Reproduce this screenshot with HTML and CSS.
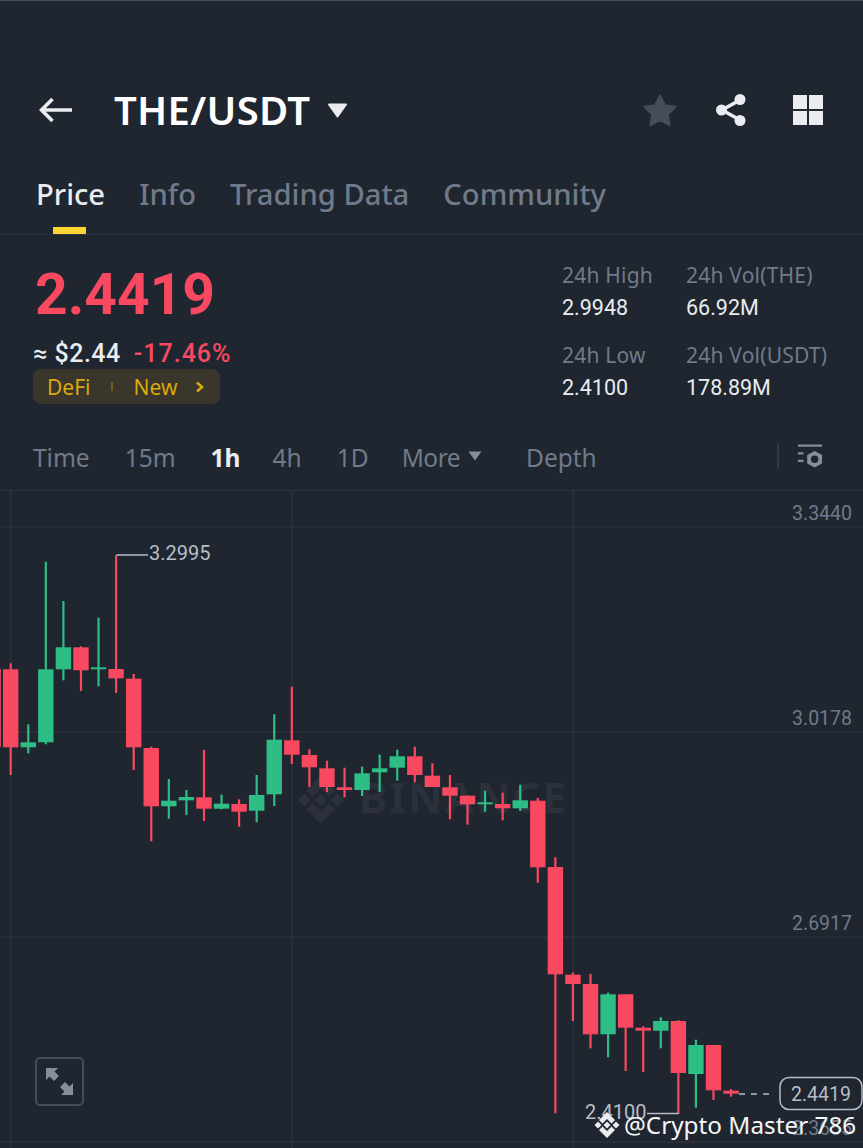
FILE: index.html
```html
<!DOCTYPE html>
<html lang="en">
<head>
  <meta charset="UTF-8">
  <meta name="viewport" content="width=device-width, initial-scale=1.0">
  <title>THE/USDT</title>
  <link rel="stylesheet" href="styles.css">
</head>
<body>
  <div class="screen">
    <header class="top-bar">
      <svg class="back-icon" viewBox="0 0 34 26"><path d="M2 13H33M13.500 2 2.500 13 13.500 24" fill="none" stroke="#eaecef" stroke-width="3.600"/></svg>
      <h1 class="pair">THE/USDT</h1>
      <svg class="pair-caret" viewBox="0 0 21 15"><path d="M2 1.500H19L10.500 13.500Z" fill="#eaecef" stroke="#eaecef" stroke-width="2" stroke-linejoin="round"/></svg>
      <div class="top-icons">
        <svg class="star-icon" viewBox="0 0 34 33"><path d="M17 1.500 21.800 11.200 32.500 12.700 24.800 20.200 26.600 31 17 25.900 7.400 31 9.200 20.200 1.500 12.700 12.200 11.200Z" fill="#474d57" stroke="#474d57" stroke-width="2" stroke-linejoin="round"/></svg>
        <svg class="share-icon" viewBox="0 0 32 34"><path d="M25 7 7 17 25 27" fill="none" stroke="#eaecef" stroke-width="3.600"/><circle cx="25" cy="6.500" r="5.500" fill="#eaecef"/><circle cx="6.500" cy="17" r="5.500" fill="#eaecef"/><circle cx="25" cy="27.500" r="5.500" fill="#eaecef"/></svg>
        <div class="grid-icon"><i></i><i></i><i></i><i></i></div>
      </div>
    </header>

    <nav class="tabs">
      <a class="tab active">Price</a>
      <a class="tab">Info</a>
      <a class="tab">Trading Data</a>
      <a class="tab">Community</a>
    </nav>

    <section class="summary">
      <div class="price-box">
        <div class="last-price">2.4419</div>
        <div class="price-sub"><span class="usd">≈ $2.44</span><span class="change">-17.46%</span></div>
        <div class="tags">
          <span>DeFi</span>
          <i class="tag-sep"></i>
          <span>New</span>
          <svg class="tag-arrow" viewBox="0 0 10 12"><path d="M2 1.500 7 6 2 10.500" fill="none" stroke="#d9a90e" stroke-width="2.600"/></svg>
        </div>
      </div>
      <div class="stats">
        <div class="stat"><span class="stat-label">24h High</span><span class="stat-value">2.9948</span></div>
        <div class="stat"><span class="stat-label">24h Vol(THE)</span><span class="stat-value">66.92M</span></div>
        <div class="stat"><span class="stat-label">24h Low</span><span class="stat-value">2.4100</span></div>
        <div class="stat"><span class="stat-label">24h Vol(USDT)</span><span class="stat-value">178.89M</span></div>
      </div>
    </section>

    <div class="intervals">
      <span>Time</span>
      <span>15m</span>
      <span class="current">1h</span>
      <span>4h</span>
      <span>1D</span>
      <span class="more">More <svg class="more-caret" viewBox="0 0 14 10"><path d="M0.500 0.500H13.500L7 9.500Z" fill="#848e9c"/></svg></span>
      <span class="depth">Depth</span>
      <i class="intervals-sep"></i>
      <svg class="settings-icon" viewBox="0 0 28 28"><path d="M1 1.500H27V4H1ZM1 10H7V12.500H1ZM1 18H7V20.500H1Z" fill="#848e9c"/><path fill-rule="evenodd" d="M19 8.500 27 13V22L19 26.500 11 22V13ZM19 13.500A4 4 0 1 0 19 21.500 4 4 0 1 0 19 13.500Z" fill="#848e9c"/></svg>
    </div>

    <div class="chart">
      <svg id="chartSvg" class="chart-svg" viewBox="0 491 863 657"></svg>
      <button class="expand" type="button">
        <svg viewBox="0 0 29 29"><path d="M1 1H13L9.500 4.500 14 9 9 14 4.500 9.500 1 13ZM28 28H16L19.500 24.500 15 20 20 15 24.500 19.500 28 16Z" fill="#848e9c"/></svg>
      </button>
      <div class="credit">
        <svg class="credit-logo" viewBox="0 0 28 28"><path d="M14 1 22 9 18.500 12.500 14 8 9.500 12.500 6 9ZM5 10.500 8.500 14 5 17.500 1.500 14ZM23 10.500 26.500 14 23 17.500 19.500 14ZM14 10.500 17.500 14 14 17.500 10.500 14ZM14 27 22 19 18.500 15.500 14 20 9.500 15.500 6 19Z" fill="#eaecef"/></svg>
        <span>@Crypto Master 786</span>
      </div>
    </div>
  </div>
  <script src="chart.js"></script>
</body>
</html>
```

FILE: styles.css
```css
* {
  box-sizing: border-box;
}
body {
  margin: 0;
  background-color: #1f2630;
  font-family: "Noto Sans", Roboto, sans-serif;
  color: #eaecef;
}
.screen {
  height: 1148px;
  border-top: 1px solid #474d57;
  display: flex;
  flex-direction: column;
  overflow: hidden;
}

/* top bar */
.top-bar {
  display: flex;
  align-items: center;
  height: 46px;
  margin-top: 86px;
  padding: 0 40px 0 39px;
}
.back-icon {
  width: 34px;
  height: 26px;
  margin-right: 41px;
}
.pair {
  margin: 0;
  font-size: 40px;
  font-weight: 600;
  line-height: 46px;
  color: #fff;
  letter-spacing: 0.3px;
}
.pair-caret {
  width: 21px;
  height: 15px;
  margin-left: 17px;
}
.top-icons {
  margin-left: auto;
  display: flex;
  align-items: center;
}
.star-icon {
  width: 34px;
  height: 33px;
  margin-right: 38px;
}
.share-icon {
  width: 32px;
  height: 34px;
  margin-right: 46px;
}
.grid-icon {
  display: grid;
  grid-template-columns: 14px 14px;
  grid-template-rows: 14px 14px;
  gap: 2px;
}
.grid-icon i {
  background-color: #eaecef;
}

/* tabs */
.tabs {
  display: flex;
  gap: 34px;
  height: 102px;
  padding: 41px 36px 0;
  border-bottom: 1px solid #2b323d;
}
.tab {
  position: relative;
  font-size: 29.200px;
  font-weight: 500;
  line-height: 40px;
  color: #707a8a;
}
.tab.active {
  color: #eaecef;
}
.tab.active::after {
  content: "";
  position: absolute;
  left: 17px;
  bottom: 0;
  width: 33px;
  height: 7px;
  background-color: #fcd535;
}

/* price + stats */
.summary {
  display: flex;
  justify-content: space-between;
  height: 176px;
  padding: 0 33px;
}
.price-box {
  display: flex;
  flex-direction: column;
  align-items: flex-start;
  padding-top: 26px;
}
.last-price {
  font-family: Roboto, sans-serif;
  font-size: 57px;
  font-weight: 700;
  line-height: 68px;
  color: #f84960;
  margin-left: 2px;
}
.price-sub {
  display: flex;
  gap: 13px;
  margin-top: 10px;
  font-family: Roboto, sans-serif;
  font-size: 25px;
  line-height: 30px;
  font-weight: 500;
}
.usd {
  letter-spacing: 0.5px;
}
.change {
  color: #f84960;
  letter-spacing: 1px;
}
.tags {
  display: flex;
  align-items: center;
  width: 187px;
  height: 35px;
  padding: 0 14px;
  border-radius: 8px;
  background-color: #3a362b;
  font-size: 21px;
  color: #d9a90e;
}
.tag-sep {
  width: 2px;
  height: 9px;
  margin: 0 21px 0 20px;
  background-color: #6e5d1f;
}
.tag-arrow {
  width: 10px;
  height: 12px;
  margin-left: 18px;
}
.stats {
  display: grid;
  grid-template-columns: 124px 144px;
  grid-template-rows: 80px 80px;
  padding-top: 26px;
}
.stat {
  display: flex;
  flex-direction: column;
}
.stat-label {
  font-size: 21px;
  letter-spacing: 0.2px;
  line-height: 28px;
  color: #707a8a;
  white-space: nowrap;
}
.stat-value {
  margin-top: 3px;
  font-family: Roboto, sans-serif;
  font-size: 21.500px;
  line-height: 32px;
  color: #eaecef;
}

/* intervals */
.intervals {
  display: flex;
  align-items: center;
  height: 80px;
  padding: 13px 40px 0 33px;
  border-bottom: 1px solid #2b323d;
  font-size: 24.500px;
  color: #707a8a;
}
.intervals span {
  margin-right: 35px;
}
.intervals .current {
  color: #eaecef;
  font-weight: 700;
  margin-right: 32px;
}
.intervals .more {
  margin-left: -2px;
  margin-right: 44px;
  letter-spacing: -0.5px;
}
.more-caret {
  width: 14px;
  height: 10px;
  margin-left: 2px;
  vertical-align: 6px;
}
.intervals .depth {
  margin-right: auto;
}
.intervals-sep {
  width: 2px;
  height: 26px;
  margin-top: -3px;
  background-color: #333a45;
}
.settings-icon {
  width: 26px;
  height: 26px;
  margin-left: 18px;
  margin-top: -2px;
}

/* chart */
.chart {
  position: relative;
  flex: 1;
  min-height: 0;
}
.chart-svg {
  display: block;
  width: 863px;
  height: 657px;
}
.grid-line {
  stroke: #2b323d;
  stroke-width: 1.500;
}
.price-label {
  font-family: Roboto, sans-serif;
  font-size: 19.500px;
  fill: #707a8a;
  text-anchor: end;
}
.up {
  fill: #2ebd85;
}
.down {
  fill: #f84960;
}
.extreme-label {
  font-family: Roboto, sans-serif;
  font-size: 20px;
  fill: #b7bdc6;
}
.extreme-line {
  fill: none;
  stroke: #b7bdc6;
  stroke-width: 1.500;
}
.last-dash {
  stroke: #b7bdc6;
  stroke-width: 1.500;
  stroke-dasharray: 6 6;
}
.last-tag {
  fill: #1f2630;
  stroke: #b7bdc6;
  stroke-width: 1.500;
}
.last-tag-text {
  font-family: Roboto, sans-serif;
  font-size: 19.500px;
  fill: #b7bdc6;
  text-anchor: middle;
}
.logo-mark {
  fill: #2b303b;
}
.logo-word {
  font-family: "Noto Sans", sans-serif;
  font-size: 42px;
  font-weight: 700;
  letter-spacing: 2.500px;
  fill: #2b303b;
}
.expand {
  position: absolute;
  left: 35px;
  top: 566px;
  width: 49px;
  height: 49px;
  padding: 8px;
  border: 2px solid #474d57;
  border-radius: 5px;
  background: none;
}
.expand svg {
  display: block;
  width: 29px;
  height: 29px;
}
.credit {
  position: absolute;
  left: 593px;
  top: 618px;
  display: flex;
  align-items: center;
  gap: 3px;
  font-size: 24.300px;
  line-height: 32px;
  color: #f5f5f5;
  white-space: nowrap;
}
.credit-logo {
  width: 28px;
  height: 28px;
}
```

FILE: chart.js
```js
// [color, wickTop, bodyTop, bodyBottom, wickBottom] in page px, one per hour
const candles = [
  ['down', 636, 669, 747, 747],
  ['down', 663.3, 669.3, 747.3, 775],
  ['up', 724.3, 742.3, 747.3, 753.3],
  ['up', 561.7, 669.3, 742.3, 744.3],
  ['up', 601, 647.3, 669.3, 680.3],
  ['down', 646.3, 647.3, 670.3, 691],
  ['up', 617.7, 667.3, 669.3, 686.3],
  ['down', 555.3, 669, 678.3, 693],
  ['down', 674, 678.7, 747.3, 770],
  ['down', 746.7, 748, 806.3, 841.3],
  ['up', 779, 800.7, 806.3, 818.7],
  ['up', 790, 797, 800.3, 815],
  ['down', 750, 797.3, 808.7, 821],
  ['up', 794.7, 803.7, 808.7, 809.3],
  ['down', 799.3, 804, 811.7, 826.7],
  ['up', 775, 795, 810.7, 822.3],
  ['up', 714.3, 739.7, 794.3, 806],
  ['down', 686.7, 740.3, 754.7, 764],
  ['down', 749.3, 755, 767.3, 787],
  ['down', 760.7, 768.3, 787, 792],
  ['down', 767.7, 787.3, 790, 797.3],
  ['up', 766.7, 773.3, 790, 796],
  ['up', 754.7, 768.3, 772.3, 792],
  ['up', 749.7, 756.3, 767.7, 780.7],
  ['down', 746.7, 756.3, 775, 782.3],
  ['down', 763.3, 775.7, 787, 787],
  ['down', 775, 787.3, 795.7, 819.3],
  ['down', 795.7, 795.7, 804.3, 824.7],
  ['up', 790.7, 802.3, 804, 811.7],
  ['down', 792.7, 804, 808.3, 820.3],
  ['up', 784.7, 800.3, 808.3, 811],
  ['down', 798, 800.7, 867.3, 882.7],
  ['down', 857.3, 867, 974.3, 1113.3],
  ['down', 972.7, 974.7, 984, 1021],
  ['down', 974, 984, 1034.3, 1048.3],
  ['up', 992.7, 994.3, 1034.3, 1057.3],
  ['down', 994.3, 994.3, 1027.7, 1071],
  ['down', 1026.3, 1027.7, 1030.7, 1072],
  ['up', 1017.3, 1021, 1030.7, 1048.3],
  ['down', 1020.3, 1021, 1073, 1114],
  ['up', 1039.7, 1045, 1074, 1107.7],
  ['down', 1045, 1045, 1090.3, 1100],
  ['down', 1089, 1090.7, 1093.7, 1096.7]
];

const svg = document.getElementById('chartSvg');
const NS = 'http://www.w3.org/2000/svg';

function add(tag, attrs, text) {
  const el = document.createElementNS(NS, tag);
  Object.keys(attrs).forEach(key => el.setAttribute(key, attrs[key]));
  if (text) el.textContent = text;
  svg.appendChild(el);
  return el;
}

// Grid
[527, 732, 937, 1142].forEach(y => {
  add('line', { class: 'grid-line', x1: 0, x2: 863, y1: y, y2: y });
});
[10.7, 292, 573.3].forEach(x => {
  add('line', { class: 'grid-line', x1: x, x2: x, y1: 491, y2: 1148 });
});
[['3.3440', 520], ['3.0178', 725], ['2.6917', 930], ['2.3655', 1135]].forEach(row => {
  add('text', { class: 'price-label', x: 852, y: row[1] }, row[0]);
});

// Watermark
add('path', {
  class: 'logo-mark',
  transform: 'translate(295 774) scale(1.85)',
  d: 'M14 1 22 9 18.5 12.5 14 8 9.5 12.5 6 9ZM5 10.5 8.5 14 5 17.5 1.5 14ZM23 10.5 26.5 14 23 17.5 19.5 14ZM14 10.5 17.5 14 14 17.5 10.5 14ZM14 27 22 19 18.5 15.5 14 20 9.5 15.5 6 19Z'
});
add('text', { class: 'logo-word', x: 359, y: 813 }, 'BINANCE');

// Candles
const STEP = 17.57;
const FIRST_X = -6.87;
const BODY_W = 15.4;
candles.forEach((c, i) => {
  const x = FIRST_X + STEP * i;
  add('rect', { class: c[0], x: x - 1.1, y: c[1], width: 2.2, height: c[4] - c[1] });
  add('rect', { class: c[0], x: x - BODY_W / 2, y: c[2], width: BODY_W, height: Math.max(c[3] - c[2], 2) });
});

// High / low markers
add('path', { class: 'extreme-line', d: 'M116.3 555H148' });
add('text', { class: 'extreme-label', x: 149, y: 560 }, '3.2995');
add('path', { class: 'extreme-line', d: 'M678.7 1113.5H647' });
add('text', { class: 'extreme-label', x: 585, y: 1119 }, '2.4100');

// Last price
add('line', { class: 'last-dash', x1: 739, x2: 772, y1: 1094, y2: 1094 });
add('rect', { class: 'last-tag', x: 780, y: 1077.5, width: 82, height: 32, rx: 9 });
add('text', { class: 'last-tag-text', x: 821, y: 1101 }, '2.4419');
```
